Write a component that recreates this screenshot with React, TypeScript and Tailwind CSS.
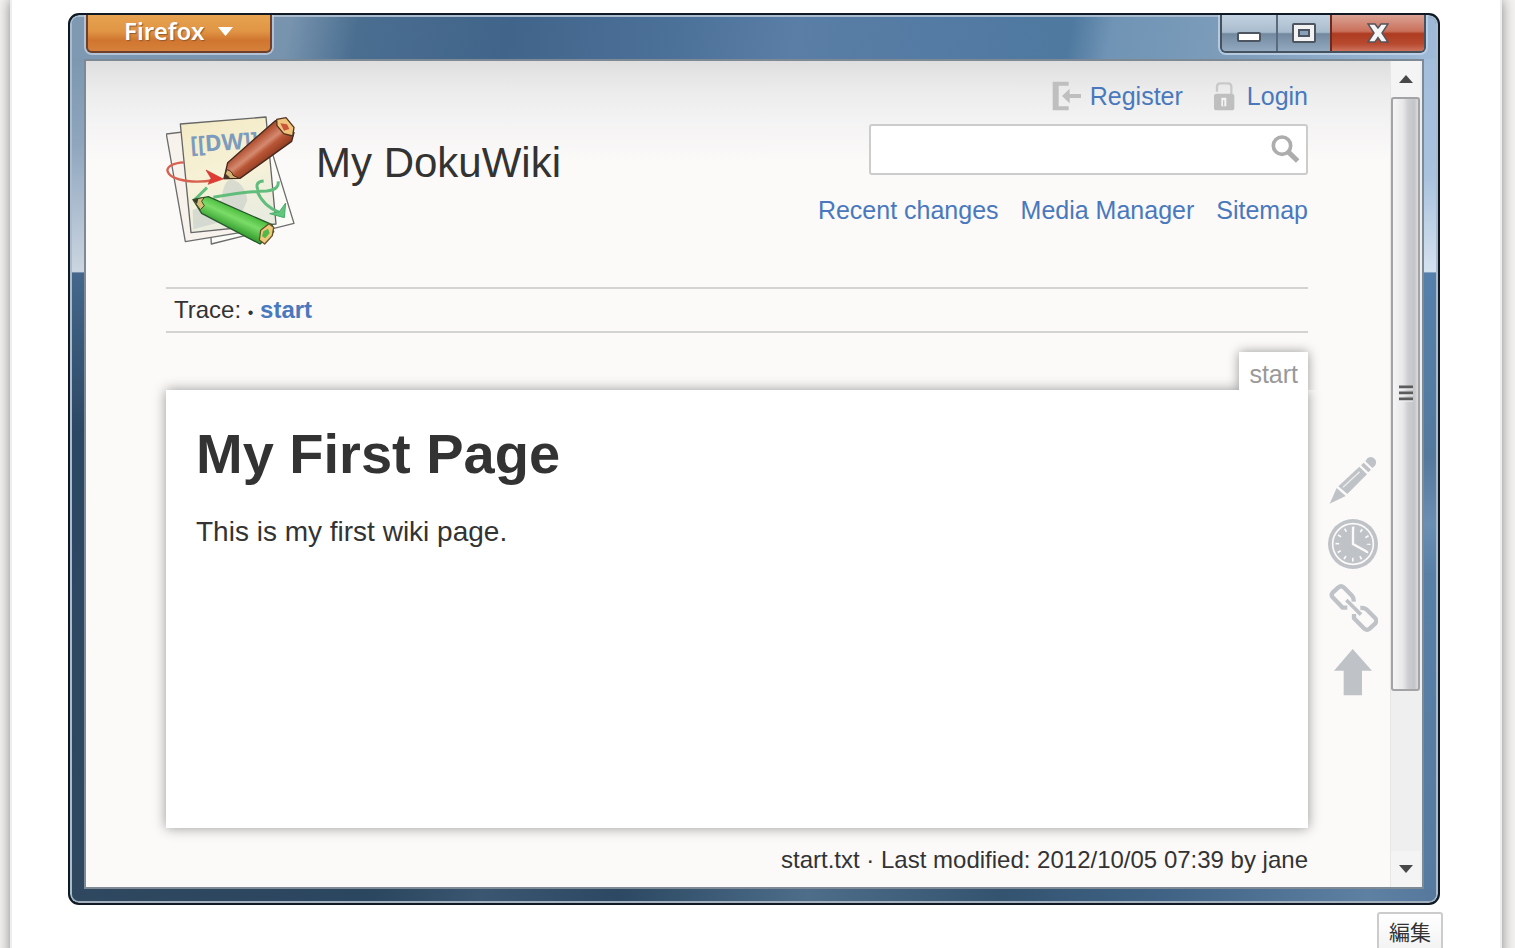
import type { ReactNode } from 'react';

const ICON_GRAY = '#bfc3c7';

const NAV_LINKS = ['Recent changes', 'Media Manager', 'Sitemap'];

export default function App() {
  return (
    <div className="h-screen overflow-hidden bg-[#f3f2f0] pr-[13px] pl-2.5 font-['Liberation_Sans',Arial,sans-serif] text-[#333]">
      <main className="flex min-h-full flex-col border-x-2 border-[#eee] bg-white pt-[13px] pr-[57px] pl-14 shadow-[0_0_12px_rgba(0,0,0,0.45)]">
        <BrowserWindow>
          <WikiPage />
        </BrowserWindow>
        <button className="mt-[7px] h-12 w-[66px] self-end rounded-[3px] border-2 border-[#ccc] bg-gradient-to-b from-white to-[#f0f0f0] pb-2.5 font-['Noto_Sans_CJK_JP',sans-serif] text-[21px] leading-[32px] text-[#333]">
          編集
        </button>
      </main>
    </div>
  );
}

function BrowserWindow({ children }: { children: ReactNode }) {
  return (
    <section className="mr-[3px] overflow-hidden rounded-[11px] border-2 border-[#111a24] bg-[#111a24]">
      <div className="rounded-[9px] border-2 border-[#a9bccd] border-b-[#a3b0bd] bg-[#5b7fa3]">
        <TitleBar />
        <div className="flex">
          <div className="w-3 bg-[linear-gradient(#7d97b0_0%,#8ea5bd_10%,#ccd5e1_25.6%,#44678b_25.8%,#2c4763_45%,#2f4860_100%)]" />
          <div className="flex min-w-0 flex-1 border-2 border-[#7d8a96]">
            {children}
            <ScrollBar />
          </div>
          <div className="w-3 bg-[linear-gradient(#a3bddd_0%,#a9c2de_14%,#d5e2f0_25.6%,#5580ab_25.8%,#54799d_48%,#6a8fb3_56%,#587fa6_62%,#567ba0_100%)]" />
        </div>
        <div className="h-3 rounded-b-[7px] bg-[linear-gradient(90deg,#2f4860_0%,#2b465f_22%,#3a5670_30%,#2c4862_40%,#4d6d89_54%,#33536f_68%,#406385_80%,#5d80a3_95%,#55789c_100%)]" />
      </div>
    </section>
  );
}

function TitleBar() {
  return (
    <header className="flex h-[42px] items-start justify-between rounded-t-[7px] bg-[linear-gradient(100deg,#7f99b3_0%,#7793ae_16%,#4a6e90_21%,#41648a_32%,#4c7198_44%,#5a7ea5_53%,#527aa3_66%,#4f799f_73%,#7094b5_76%,#7f9ebb_86%,#a0bbda_100%)] pr-2.5 pl-3.5">
      <button className="-mt-0.5 flex h-[38px] w-[186px] items-center gap-3.5 rounded-b-md border-2 border-t-0 border-[#703f2c] bg-[linear-gradient(#e6a350_0%,#e09545_45%,#d0752f_70%,#d5813b_100%)] pb-1 pl-9 font-['Noto_Sans',sans-serif] text-[24px] leading-[32px] font-semibold text-white shadow-[0_0_0_2px_rgba(200,213,227,0.7)] [text-shadow:1px_1px_1px_#8d5a30]">
        Firefox
        <svg width="15" height="9" viewBox="0 0 15 9" aria-hidden="true">
          <path d="M0 0H15L7.5 9Z" fill="#fff" />
        </svg>
      </button>
      <div className="-mt-0.5 flex h-[38px] rounded-b-md border-2 border-t-0 border-[#45525f] shadow-[0_0_0_2px_rgba(195,213,232,0.8)]">
        <button
          aria-label="Minimize"
          className="flex w-14 items-center justify-center rounded-bl-[4px] border-r-2 border-[#596b7d] bg-[linear-gradient(#c3d2e1_0%,#a8bbcd_48%,#72899f_52%,#93a9bf_100%)] pt-2"
        >
          <svg width="24" height="10" viewBox="0 0 24 10" aria-hidden="true">
            <rect x="1" y="1" width="22" height="8" rx="1" fill="#fff" stroke="#4c5560" strokeWidth="2" />
          </svg>
        </button>
        <button
          aria-label="Maximize"
          className="flex w-[52px] items-center justify-center bg-[linear-gradient(#c3d2e1_0%,#a8bbcd_48%,#72899f_52%,#93a9bf_100%)]"
        >
          <svg width="24" height="20" viewBox="0 0 24 20" aria-hidden="true">
            <rect x="1" y="1" width="22" height="18" rx="1" fill="#f2f2f2" stroke="#4c5560" strokeWidth="2" />
            <rect x="7" y="7" width="10" height="6" fill="#89a0b8" stroke="#4c5560" strokeWidth="2" />
          </svg>
        </button>
        <button
          aria-label="Close"
          className="flex w-[94px] items-center justify-center rounded-br-[4px] border-l-2 border-[#6c2a20] bg-[linear-gradient(#dba294_0%,#c9705b_45%,#ad3b20_52%,#b84a30_80%,#cc715b_100%)]"
        >
          <svg width="22" height="20" viewBox="0 0 22 20" aria-hidden="true">
            <path
              d="M1 1H8L11 5L14 1H21L15 10L21 19H14L11 14.5L8 19H1L7 10Z"
              fill="#f5f5f5"
              stroke="#56535a"
              strokeWidth="1.5"
            />
          </svg>
        </button>
      </div>
    </header>
  );
}

function ScrollBar() {
  return (
    <div className="flex w-8 flex-col border-l border-[#e6e6e6] bg-[#efefef] pr-0.5" aria-hidden="true">
      <div className="flex h-9 items-center justify-center bg-[#f4f4f4]">
        <svg width="14" height="8" viewBox="0 0 14 8">
          <path d="M0 8L7 0L14 8Z" fill="#484848" />
        </svg>
      </div>
      <div className="flex flex-[594] items-center justify-center rounded-[3px] border-2 border-[#a3a3a5] bg-[linear-gradient(90deg,#f5f5f5_0%,#e8e8ea_40%,#cdced1_60%,#c4c5c9_85%,#dcdcde_100%)]">
        <svg width="14" height="18" viewBox="0 0 14 18">
          <path d="M0 2H14M0 8H14M0 14H14" stroke="#5c5c5c" strokeWidth="3" />
          <path d="M0 4H14M0 10H14M0 16H14" stroke="#f3f3f3" strokeWidth="1" />
        </svg>
      </div>
      <div className="flex-[161]" />
      <div className="flex h-9 items-center justify-center bg-[#f4f4f4]">
        <svg width="14" height="8" viewBox="0 0 14 8">
          <path d="M0 0L7 8L14 0Z" fill="#484848" />
        </svg>
      </div>
    </div>
  );
}

function WikiPage() {
  return (
    <div className="flex min-w-0 flex-1 bg-[#fbfaf9] bg-[linear-gradient(#dedede_0px,#ececec_30px,#f4f3f3_60px,#fbfaf9_100px)] pt-5 pb-3 pl-20">
      <div className="min-w-0 flex-1">
        <header className="flex items-start justify-between">
          <div className="flex items-center gap-5 pt-[35px]">
            <DokuWikiLogo />
            <h1 className="pb-9 text-[42px] leading-[48px]">My DokuWiki</h1>
          </div>
          <div className="flex flex-col items-end">
            <div className="flex h-[30px] items-center text-[25px] leading-[30px] text-[#4a78bd]">
              <a href="#register" className="flex items-center gap-2">
                <RegisterIcon />
                Register
              </a>
              <a href="#login" className="ml-[30px] flex items-center gap-3">
                <LockIcon />
                Login
              </a>
            </div>
            <form className="relative mt-[13px]">
              <input
                type="text"
                aria-label="Search"
                className="block h-[51px] w-[439px] rounded-[3px] border-2 border-[#ccc] bg-white pr-12 pl-3 text-[25px] outline-none"
              />
              <button type="button" aria-label="Search" className="absolute top-2.5 right-2">
                <SearchIcon />
              </button>
            </form>
            <nav className="mt-5 flex gap-[22px] text-[25px] leading-[30px] text-[#4a78bd]">
              {NAV_LINKS.map((label) => (
                <a key={label} href="#nav">
                  {label}
                </a>
              ))}
            </nav>
          </div>
        </header>

        <div className="mt-[41px] h-[46px] border-y-2 border-[#d3d3d2] pl-2 text-[24px] leading-[42px]">
          Trace: <span className="text-[16px]">•</span>{' '}
          <a href="#start" className="font-bold text-[#4a78bd]">
            start
          </a>
        </div>

        {/* Page tab sits flush on the page box */}
        <div className="mt-[19px] flex justify-end">
          <div className="relative z-10 h-[38px] bg-white px-2.5 pt-[7px] text-[25px] leading-[30px] text-[#999] shadow-[0_0_12px_rgba(0,0,0,0.4)] [clip-path:inset(-16px_-16px_0_-16px)]">
            start
          </div>
        </div>
        <article className="min-h-[438px] bg-white px-[30px] pt-8 shadow-[0_0_12px_rgba(0,0,0,0.4)]">
          <h2 className="text-[56px] leading-[64px] font-bold">My First Page</h2>
          <p className="mt-7 text-[28px] leading-[36px]">This is my first wiki page.</p>
        </article>
        <footer className="mt-[17px] text-right text-[24px] leading-[30px]">
          start.txt · Last modified: 2012/10/05 07:39 by jane
        </footer>
      </div>
      <PageTools />
    </div>
  );
}

function PageTools() {
  return (
    <aside className="flex w-[82px] flex-col items-start gap-3.5 pt-[374px] pl-5">
      <a href="#edit" aria-label="Edit this page">
        <svg width="50" height="50" viewBox="54 44 150 150" fill={ICON_GRAY}>
          <path d="M166 63L172 54Q184 45 194 55Q203 66 194 77L187 83Z" />
          <path d="M153 75L161 67L183 88L175 96Z" />
          <path d="M148 79L171 102L112 161L85 138Z" />
          <path d="M80 143L107 167L59 190Z" />
          <path d="M99 141L149 94" stroke="#ececec" strokeWidth="4" />
        </svg>
      </a>
      <a href="#revisions" aria-label="Old revisions">
        <svg width="50" height="50" viewBox="54 236 150 150" fill={ICON_GRAY}>
          <circle cx="129" cy="311" r="75" />
          <circle cx="129" cy="311" r="61" fill="none" stroke="#fbfaf9" strokeWidth="5" />
          <circle
            cx="129"
            cy="311"
            r="47"
            fill="none"
            stroke="#fbfaf9"
            strokeWidth="11"
            strokeDasharray="5 19.609"
            strokeDashoffset="2.5"
          />
          <path d="M129 260V311L172 335" fill="none" stroke="#fbfaf9" strokeWidth="7" />
        </svg>
      </a>
      <a href="#backlinks" aria-label="Backlinks">
        <svg
          width="50"
          height="50"
          viewBox="54 426 150 150"
          fill="none"
          stroke={ICON_GRAY}
          strokeWidth="13"
          strokeLinejoin="round"
        >
          <path d="M112 500H98L68 469Q62 462 68 455L85 439Q93 432 101 439L126 464Q132 470 131 482" />
          <path d="M132 519V532L163 563Q171 570 179 563L196 547Q202 539 196 532L169 505Q163 500 151 501" />
          <path d="M109 477L153 521" strokeWidth="11" />
        </svg>
      </a>
      <a href="#top" aria-label="Back to top">
        <svg width="50" height="50" viewBox="54 621 150 150" fill={ICON_GRAY}>
          <path d="M128 627L186 692H156V766H101V692H72Z" />
        </svg>
      </a>
    </aside>
  );
}

function RegisterIcon() {
  return (
    <svg width="30" height="30" viewBox="58 36 90 90" fill="#bfbfc0" aria-hidden="true">
      <path d="M60 38H108V50H78V112H108V124H60Z" />
      <path d="M88 81L111 59V75H145V87H111V103Z" />
    </svg>
  );
}

function LockIcon() {
  return (
    <svg width="22" height="30" viewBox="543 36 66 90" aria-hidden="true">
      <path
        d="M555 68V53Q555 43 565 43H588Q598 43 598 53V78"
        fill="none"
        stroke="#c9c9c9"
        strokeWidth="7"
      />
      <rect x="546" y="74" width="61" height="50" rx="8" fill="#bfbfc0" />
      <path d="M568 86H583V112H568Z" fill="#f3f3f3" />
      <path d="M573 94H577V110H573Z" fill="#bfbfc0" />
    </svg>
  );
}

function SearchIcon() {
  return (
    <svg width="30" height="30" viewBox="718 194 90 90" fill="none" stroke="#adadad" aria-hidden="true">
      <circle cx="754" cy="229" r="26" strokeWidth="11" />
      <path d="M772 247L801 275" strokeWidth="15" />
    </svg>
  );
}

function DokuWikiLogo() {
  return (
    <svg width="130" height="130" viewBox="48 48 390 390" role="img" aria-label="DokuWiki" strokeLinejoin="round">
      <defs>
        <linearGradient id="paper" x1="0" y1="0" x2="0.3" y2="1">
          <stop offset="0" stopColor="#f3eac4" />
          <stop offset="0.6" stopColor="#f7f2d8" />
          <stop offset="1" stopColor="#e9ecdf" />
        </linearGradient>
        <linearGradient id="red-pencil" gradientUnits="userSpaceOnUse" x1="300" y1="130" x2="346" y2="188">
          <stop offset="0" stopColor="#b04e30" />
          <stop offset="0.4" stopColor="#d58a6f" />
          <stop offset="0.6" stopColor="#b85636" />
          <stop offset="1" stopColor="#8f3a20" />
        </linearGradient>
        <linearGradient id="green-pencil" gradientUnits="userSpaceOnUse" x1="270" y1="325" x2="240" y2="390">
          <stop offset="0" stopColor="#3fb532" />
          <stop offset="0.45" stopColor="#7bdc68" />
          <stop offset="1" stopColor="#2f9a2b" />
        </linearGradient>
      </defs>
      <path d="M170 160L358 130L432 370L184 432Z" fill="#fbfbf8" stroke="#6d6d6d" strokeWidth="4" />
      <path d="M49 102L230 80L270 398L106 425Z" fill="#f8f2ec" stroke="#6d6d6d" strokeWidth="4" />
      <path d="M91 72L348 51L378 372L123 398Z" fill="url(#paper)" stroke="#666" strokeWidth="4" />
      <path d="M215 300Q220 240 245 238Q285 250 292 300L270 350L130 388L128 330Z" fill="#b8c2c4" opacity="0.45" />
      <text
        x="122"
        y="158"
        transform="rotate(-4 122 158)"
        fill="#7d9cbd"
        fontFamily="'Noto Sans', sans-serif"
        fontSize="68"
        fontWeight="700"
      >
        [[DW]]
      </text>
      <path
        d="M102 187Q55 190 52 211Q57 236 112 243Q150 248 192 240"
        fill="none"
        stroke="#d7604f"
        strokeWidth="7"
      />
      <path d="M168 210L220 237L174 253L183 235Z" fill="#e03a32" stroke="#c63a30" strokeWidth="2" />
      <path
        d="M190 292Q290 274 350 273Q390 268 384 244M341 243Q313 245 324 270M320 270Q338 318 390 338M171 263L133 300"
        fill="none"
        stroke="#61bd7b"
        strokeWidth="9"
      />
      <path d="M407 309L403 353L359 341L388 335Z" fill="#62c57e" stroke="#4aae68" strokeWidth="3" />
      <path d="M222 236L233 188L376 62L432 98L425 124L270 235Z" fill="url(#red-pencil)" stroke="#44281d" strokeWidth="4" />
      <path d="M222 236L230 209Q246 212 249 226L268 235Z" fill="#d6b574" stroke="#44281d" strokeWidth="3" />
      <path d="M222 236L227 221L240 233Z" fill="#42352c" />
      <path d="M380 58L408 53L432 82L428 108L401 101L381 77Z" fill="#efc47c" stroke="#54351f" strokeWidth="4" />
      <path d="M391 70L411 73L418 87L402 92Z" fill="#c9553a" />
      <path d="M129 299L175 290L366 374L371 395L330 432L155 340Z" fill="url(#green-pencil)" stroke="#26582a" strokeWidth="4" />
      <path d="M129 299L163 292L155 304L163 317L151 329Z" fill="#d7bd76" stroke="#3d4b2c" strokeWidth="3" />
      <path d="M129 299L145 296L141 312Z" fill="#353a2b" />
      <path d="M332 391L357 371L371 382L367 407L344 432L328 420Z" fill="#efc879" stroke="#66532c" strokeWidth="4" />
      <path d="M340 394L354 386L359 399L346 415L336 409Z" fill="#52b84a" />
    </svg>
  );
}
